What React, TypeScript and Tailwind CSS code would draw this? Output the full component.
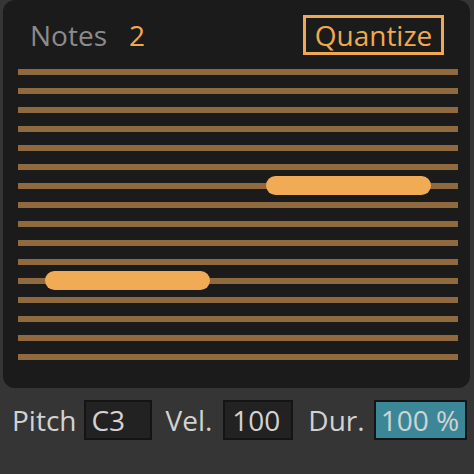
const notes: { row: number; left: number; width: number }[] = [
  { row: 6, left: 248, width: 165 },
  { row: 11, left: 27, width: 165 },
];

const rows = Array.from({ length: 16 }, (_, i) => i);

function Field({ value, className }: { value: string; className: string }) {
  return (
    <div
      className={`flex h-[40px] items-center border-2 border-[#141414] pl-[5px] leading-none ${className}`}
    >
      {value}
    </div>
  );
}

export default function App() {
  return (
    <div
      className="flex h-[474px] w-[474px] flex-col bg-[#353535] text-[28px] font-medium"
      style={{ fontFamily: '"Open Sans", "Liberation Sans", sans-serif' }}
    >
      <div className="ml-[3px] mr-[4px] h-[388px] rounded-[12px] bg-[#1b1b1b]">
        <header className="flex h-[62px] items-start justify-between pl-[27px] pr-[26px] pt-[15px]">
          <div className="flex h-[40px] items-center leading-none">
            <span className="text-[#8b8b8b]">Notes</span>
            <span className="ml-[22px] text-[#f0a94f]">2</span>
          </div>
          <button className="flex h-[40px] w-[141px] items-center justify-center border-[3px] border-[#f0a94f] leading-none text-[#f0a94f]">
            Quantize
          </button>
        </header>

        <div className="ml-[15px] mr-[12px] flex flex-col">
          {rows.map((r) => (
            <div key={r} className="relative flex h-[19px] items-center">
              <div className="h-[6px] w-full bg-[#8f6a3f]" />
              {notes
                .filter((n) => n.row === r)
                .map((n) => (
                  <div
                    key={n.left}
                    className="absolute top-0 h-[19px] rounded-full bg-[#f2ab55]"
                    style={{ left: n.left, width: n.width }}
                  />
                ))}
            </div>
          ))}
        </div>
      </div>

      <div className="flex items-center pl-[12px] pt-[12px] text-[#d2d2d2]">
        <span className="leading-none">Pitch</span>
        <Field value="C3" className="ml-[8px] w-[68px] bg-[#222222]" />
        <span className="ml-[13px] leading-none">Vel.</span>
        <Field value="100" className="ml-[11px] w-[70px] bg-[#222222] pl-[7px]" />
        <span className="ml-[15px] leading-none">Dur.</span>
        <Field value="100 %" className="ml-[9px] w-[93px] bg-[#3c8797]" />
      </div>
    </div>
  );
}
